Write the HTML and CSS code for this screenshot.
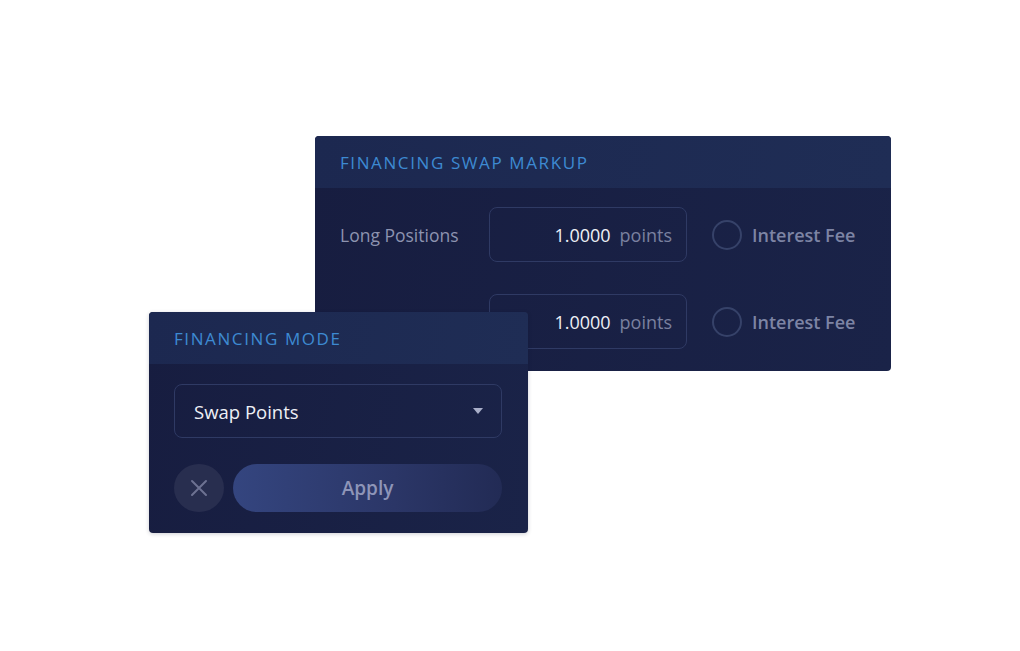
FILE: index.html
```html
<!DOCTYPE html>
<html>
<head>
    <title>Financing</title>
    <link rel="stylesheet" href="styles.css">
</head>
<body>
    <div class="canvas">
        <div class="panel panel-markup">
            <div class="panel-header">Financing Swap Markup</div>
            <div class="panel-body">
                <div class="row">
                    <div class="row-label">Long Positions</div>
                    <div class="field">
                        <span class="value">1.0000</span>
                        <span class="unit">points</span>
                    </div>
                    <div class="radio"></div>
                    <div class="radio-label">Interest Fee</div>
                </div>
                <div class="row">
                    <div class="row-label">Short Positions</div>
                    <div class="field">
                        <span class="value">1.0000</span>
                        <span class="unit">points</span>
                    </div>
                    <div class="radio"></div>
                    <div class="radio-label">Interest Fee</div>
                </div>
            </div>
        </div>

        <div class="panel panel-mode">
            <div class="panel-header">Financing Mode</div>
            <div class="panel-body">
                <div class="select">
                    <span>Swap Points</span>
                    <span class="caret"></span>
                </div>
                <div class="actions">
                    <button type="button" class="btn-close">
                        <svg width="18" height="18" viewBox="0 0 18 18">
                            <path d="M2 2 L16 16 M16 2 L2 16" stroke="#6d7292" stroke-width="2" stroke-linecap="round" fill="none"/>
                        </svg>
                    </button>
                    <button type="button" class="btn-apply">Apply</button>
                </div>
            </div>
        </div>
    </div>
</body>
</html>
```

FILE: styles.css
```css
body {
    margin: 0;
    background-color: #fff;
    font-family: "Open Sans", "Liberation Sans", sans-serif;
}
.canvas {
    position: relative;
    width: 1020px;
    height: 651px;
}
.panel {
    position: absolute;
    background: linear-gradient(100deg, #171d40 0%, #1a2348 100%);
    border-radius: 4px;
    overflow: hidden;
}
.panel-markup {
    left: 315px;
    top: 136px;
    width: 576px;
    height: 235px;
}
.panel-mode {
    left: 149px;
    top: 312px;
    width: 379px;
    height: 221px;
    box-shadow: 0 1px 4px rgba(10, 15, 40, 0.2);
}
.panel-header {
    height: 52px;
    display: flex;
    align-items: center;
    padding-left: 25px;
    background: linear-gradient(100deg, #1c2850 0%, #1f2d55 100%);
    color: #3d8ad2;
    font-size: 17px;
    letter-spacing: 1.6px;
    text-transform: uppercase;
}
.panel-markup .panel-body {
    padding: 19px 25px 0;
    display: flex;
    flex-direction: column;
    gap: 32px;
}
.row {
    display: flex;
    align-items: center;
    height: 55px;
}
.row-label {
    width: 149px;
    color: #8d93b0;
    font-size: 17.5px;
}
.field {
    width: 198px;
    height: 55px;
    box-sizing: border-box;
    border: 1px solid #2f3a64;
    border-radius: 8px;
    display: flex;
    align-items: center;
    justify-content: flex-end;
    padding-right: 14px;
    font-size: 18px;
}
.value {
    color: #eef0f6;
    margin-right: 9px;
}
.unit {
    color: #7a809f;
}
.radio {
    width: 30px;
    height: 30px;
    box-sizing: border-box;
    border: 2px solid #364269;
    border-radius: 50%;
    margin-left: 25px;
}
.radio-label {
    margin-left: 10px;
    color: #7d84a4;
    font-size: 18px;
    font-weight: 600;
}
.panel-mode .panel-body {
    padding: 20px 26px 0 25px;
}
.select {
    height: 54px;
    box-sizing: border-box;
    border: 1px solid #2f3a64;
    border-radius: 8px;
    display: flex;
    align-items: center;
    justify-content: space-between;
    padding: 0 18px 0 19px;
    color: #eef0f6;
    font-size: 18.5px;
}
.caret {
    width: 0;
    height: 0;
    border-left: 5px solid transparent;
    border-right: 5px solid transparent;
    border-top: 6px solid #a9afc9;
}
.actions {
    display: flex;
    gap: 9px;
    margin-top: 26px;
}
.btn-close {
    width: 50px;
    height: 48px;
    border: none;
    border-radius: 50%;
    background-color: #282e4f;
    display: flex;
    align-items: center;
    justify-content: center;
    padding: 0;
}
.btn-apply {
    flex: 1;
    height: 48px;
    border: none;
    border-radius: 24px;
    background: linear-gradient(90deg, #34457f 0%, #2b3667 60%, #222b55 100%);
    color: #8e95b8;
    font-family: inherit;
    font-size: 19px;
    font-weight: 600;
}
```
